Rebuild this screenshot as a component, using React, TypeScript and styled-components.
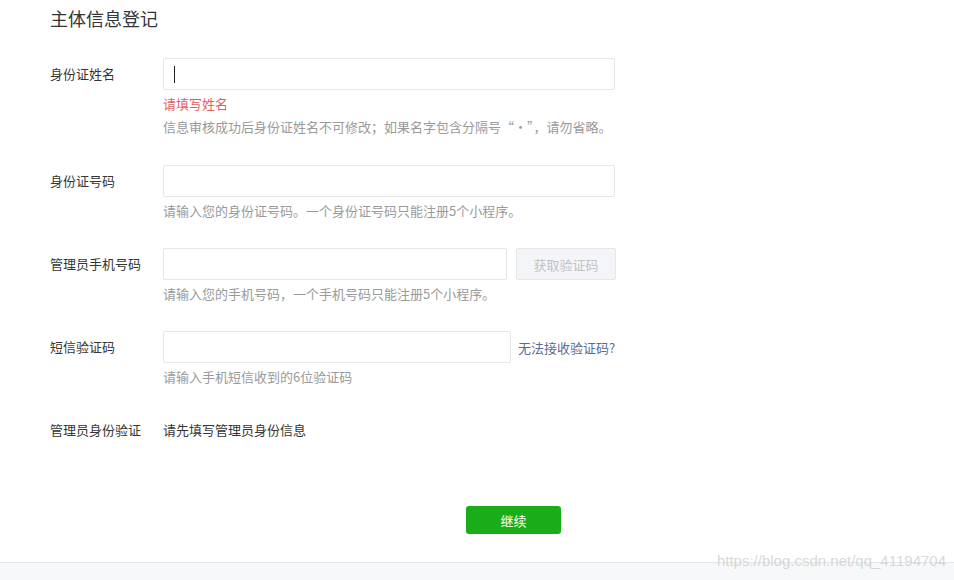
import React from "react";
import styled, { createGlobalStyle } from "styled-components";

const Global = createGlobalStyle`
  html, body { margin: 0; padding: 0; background: #fff; }
  body { font-family: "Microsoft YaHei", "Noto Sans CJK SC", sans-serif; }
`;

const Page = styled.div`
  width: 954px;
  height: 580px;
  display: flex;
  flex-direction: column;
  overflow: hidden;
`;
const Main = styled.div`
  flex: 1;
  padding-left: 50px;
`;
const Title = styled.h2`
  margin: 0 0 22px;
  font-size: 18px;
  font-weight: 400;
  line-height: 36px;
  color: #353535;
`;
const Row = styled.div<{ $gap?: number }>`
  display: grid;
  grid-template-columns: 113px auto;
  margin-bottom: ${p => p.$gap ?? 26}px;
`;
const Label = styled.div`
  font-size: 13px;
  line-height: 32px;
  color: #353535;
`;
const Field = styled.div`
  display: flex;
  flex-direction: column;
`;
const Line = styled.div`
  display: flex;
  align-items: center;
  gap: 8px;
`;
const Input = styled.div<{ $w: number }>`
  box-sizing: border-box;
  width: ${p => p.$w}px;
  height: 32px;
  border: 1px solid #e4e6e9;
  border-radius: 2px;
  display: flex;
  align-items: center;
  padding-left: 10px;
`;
const Caret = styled.span`
  width: 1px;
  height: 17px;
  background: #222;
`;
const Msg = styled.div<{ $err?: boolean; $first?: boolean }>`
  font-size: 13px;
  line-height: 22px;
  margin-top: ${p => (p.$first ? 3 : 1)}px;
  color: ${p => (p.$err ? "#e15f63" : "#9a9a9a")};
`;
const GhostBtn = styled.div`
  box-sizing: border-box;
  width: 100px;
  height: 32px;
  margin-left: 1px;
  border: 1px solid #e4e6e9;
  border-radius: 2px;
  background: #f4f5f9;
  color: #c3c3c3;
  font-size: 13px;
  display: flex;
  align-items: center;
  justify-content: center;
`;
const Link = styled.span`
  font-size: 13px;
  color: #576b95;
  margin-left: -1px;
`;
const Text = styled.div`
  font-size: 13px;
  line-height: 32px;
  color: #353535;
`;
const Actions = styled.div`
  margin-top: 60px;
  padding-left: 416px;
`;
const Primary = styled.button`
  width: 95px;
  height: 28px;
  border: none;
  border-radius: 3px;
  background: #1aad19;
  color: #fff;
  font-size: 13px;
  font-family: inherit;
`;
const Footer = styled.div`
  height: 17px;
  border-top: 1px solid #e4e6e9;
  background: #f6f8f9;
  position: relative;
`;
const Watermark = styled.span`
  position: absolute;
  right: 8px;
  top: -11px;
  font-family: "Liberation Sans", sans-serif;
  font-size: 15px;
  color: rgba(200, 200, 200, 0.7);
`;

export default function App() {
  return (
    <Page>
      <Global />
      <Main>
        <Title>主体信息登记</Title>
        <Row $gap={27}>
          <Label>身份证姓名</Label>
          <Field>
            <Input $w={452}><Caret /></Input>
            <Msg $err $first>请填写姓名</Msg>
            <Msg>信息审核成功后身份证姓名不可修改；如果名字包含分隔号“·”，请勿省略。</Msg>
          </Field>
        </Row>
        <Row>
          <Label>身份证号码</Label>
          <Field>
            <Input $w={452} />
            <Msg $first>请输入您的身份证号码。一个身份证号码只能注册5个小程序。</Msg>
          </Field>
        </Row>
        <Row>
          <Label>管理员手机号码</Label>
          <Field>
            <Line>
              <Input $w={344} />
              <GhostBtn>获取验证码</GhostBtn>
            </Line>
            <Msg $first>请输入您的手机号码，一个手机号码只能注册5个小程序。</Msg>
          </Field>
        </Row>
        <Row>
          <Label>短信验证码</Label>
          <Field>
            <Line>
              <Input $w={348} />
              <Link>无法接收验证码?</Link>
            </Line>
            <Msg $first>请输入手机短信收到的6位验证码</Msg>
          </Field>
        </Row>
        <Row $gap={0}>
          <Label>管理员身份验证</Label>
          <Text>请先填写管理员身份信息</Text>
        </Row>
        <Actions>
          <Primary>继续</Primary>
        </Actions>
      </Main>
      <Footer>
        <Watermark>https://blog.csdn.net/qq_41194704</Watermark>
      </Footer>
    </Page>
  );
}
